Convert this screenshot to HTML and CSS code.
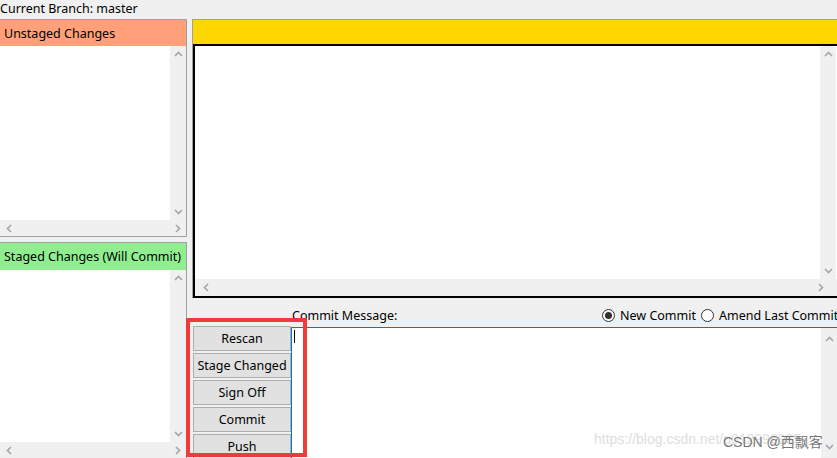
FILE: index.html
```html
<!DOCTYPE html>
<html>
<head>
<meta charset="utf-8">
<link rel="stylesheet" href="styles.css">
</head>
<body>
<div class="app">
  <div class="branch">Current Branch: master</div>
  <div class="main">
    <div class="left">
      <div class="pane pane-unstaged">
        <div class="pane-head head-unstaged">Unstaged Changes</div>
        <div class="list">
          <div class="list-row">
            <div class="list-area"></div>
            <div class="vscroll">
              <svg class="chev" width="9" height="6" viewBox="0 0 9 6"><path d="M1 5 L4.5 1.5 L8 5"/></svg>
              <svg class="chev" width="9" height="6" viewBox="0 0 9 6"><path d="M1 1 L4.5 4.5 L8 1"/></svg>
            </div>
          </div>
          <div class="hscroll">
            <svg class="chev" width="6" height="9" viewBox="0 0 6 9"><path d="M5 1 L1.5 4.5 L5 8"/></svg>
            <svg class="chev" width="6" height="9" viewBox="0 0 6 9"><path d="M1 1 L4.5 4.5 L1 8"/></svg>
          </div>
        </div>
      </div>
      <div class="pane pane-staged">
        <div class="pane-head head-staged">Staged Changes (Will Commit)</div>
        <div class="list">
          <div class="list-row">
            <div class="list-area"></div>
            <div class="vscroll">
              <svg class="chev" width="9" height="6" viewBox="0 0 9 6"><path d="M1 5 L4.5 1.5 L8 5"/></svg>
              <svg class="chev" width="9" height="6" viewBox="0 0 9 6"><path d="M1 1 L4.5 4.5 L8 1"/></svg>
            </div>
          </div>
          <div class="hscroll">
            <svg class="chev" width="6" height="9" viewBox="0 0 6 9"><path d="M5 1 L1.5 4.5 L5 8"/></svg>
            <svg class="chev" width="6" height="9" viewBox="0 0 6 9"><path d="M1 1 L4.5 4.5 L1 8"/></svg>
          </div>
        </div>
      </div>
    </div>
    <div class="right">
      <div class="diff">
        <div class="diff-head"></div>
        <div class="diff-box">
          <div class="list-row">
            <div class="list-area"></div>
            <div class="vscroll">
              <svg class="chev" width="9" height="6" viewBox="0 0 9 6"><path d="M1 5 L4.5 1.5 L8 5"/></svg>
              <svg class="chev" width="9" height="6" viewBox="0 0 9 6"><path d="M1 1 L4.5 4.5 L8 1"/></svg>
            </div>
          </div>
          <div class="hscroll">
            <svg class="chev" width="6" height="9" viewBox="0 0 6 9"><path d="M5 1 L1.5 4.5 L5 8"/></svg>
            <svg class="chev" width="6" height="9" viewBox="0 0 6 9"><path d="M1 1 L4.5 4.5 L1 8"/></svg>
          </div>
        </div>
      </div>
      <div class="commit">
        <div class="commit-bar">
          <span class="commit-label">Commit Message:</span>
          <span class="radios">
            <span class="radio checked"></span><span class="radio-text">New Commit</span>
            <span class="radio"></span><span class="radio-text">Amend Last Commit</span>
          </span>
        </div>
        <div class="commit-body">
          <div class="buttons">
            <div class="btn">Rescan</div>
            <div class="btn">Stage Changed</div>
            <div class="btn">Sign Off</div>
            <div class="btn">Commit</div>
            <div class="btn">Push</div>
          </div>
          <div class="msg">
            <div class="msg-area"><span class="caret"></span></div>
            <div class="vscroll">
              <svg class="chev" width="9" height="6" viewBox="0 0 9 6"><path d="M1 5 L4.5 1.5 L8 5"/></svg>
              <svg class="chev" width="9" height="6" viewBox="0 0 9 6"><path d="M1 1 L4.5 4.5 L8 1"/></svg>
            </div>
          </div>
        </div>
      </div>
    </div>
  </div>
  <div class="annot"></div>
  <div class="watermark"><span class="wm-url">https://blog.csdn.net/u012996985</span><span class="wm-name">CSDN @西飘客</span></div>
</div>
</body>
</html>
```
FILE: styles.css
```css
* { box-sizing: border-box; }
html, body { margin: 0; padding: 0; }
body {
  background: #f0f0f0;
  font-family: "Noto Sans", "Noto Sans CJK SC", sans-serif;
  font-size: 12.5px;
  color: #000;
  width: 837px;
  height: 458px;
  overflow: hidden;
}
.app {
  position: relative;
  width: 837px;
  height: 458px;
  display: flex;
  flex-direction: column;
}
.branch {
  height: 19px;
  line-height: 17px;
  white-space: nowrap;
}
.main {
  flex: 1;
  display: flex;
  min-height: 0;
}
.left {
  width: 187px;
  display: flex;
  flex-direction: column;
}
.pane {
  border: 1px solid #a0a0a0;
  border-left: none;
  display: flex;
  flex-direction: column;
}
.pane-unstaged { height: 218px; margin-bottom: 5px; }
.pane-staged { flex: 1; border-bottom: none; }
.pane-head {
  height: 26px;
  line-height: 27px;
  padding-left: 4px;
  white-space: nowrap;
}
.head-unstaged { background: #ffa07a; }
.head-staged { background: #90ee90; height: 27px; line-height: 27px; }
.list {
  flex: 1;
  display: flex;
  flex-direction: column;
  background: #fff;
  min-height: 0;
}
.list-row {
  flex: 1;
  display: flex;
  min-height: 0;
}
.list-area { flex: 1; background: #fff; }
.vscroll {
  width: 16px;
  background: #f0f0f0;
  display: flex;
  flex-direction: column;
  justify-content: space-between;
  align-items: center;
  padding: 5px 0 5px;
}
.hscroll {
  height: 16px;
  background: #f0f0f0;
  display: flex;
  justify-content: space-between;
  align-items: center;
  padding: 0 5px 0 6px;
}
.chev path {
  fill: none;
  stroke: #a6a6a6;
  stroke-width: 1.7;
}
.right {
  flex: 1;
  margin-left: 5px;
  display: flex;
  flex-direction: column;
  min-width: 0;
}
.diff {
  height: 279px;
  border-top: 1px solid #a0a0a0;
  border-left: 1px solid #a0a0a0;
  display: flex;
  flex-direction: column;
}
.diff-head {
  height: 24px;
  background: #ffd700;
}
.diff-box {
  flex: 1;
  border-top: 2px solid #000;
  border-left: 2px solid #000;
  border-bottom: 2px solid #000;
  display: flex;
  flex-direction: column;
  background: #fff;
  min-height: 0;
}
.diff-box .vscroll { width: 16px; margin-right: 1px; }
.diff-box .hscroll { height: 17px; padding-right: 13px; padding-left: 8px; }
.commit {
  flex: 1;
  display: flex;
  flex-direction: column;
  min-height: 0;
}
.commit-bar {
  height: 28px;
  display: flex;
  align-items: flex-end;
  padding-bottom: 2px;
  padding-left: 100px;
  white-space: nowrap;
  overflow: hidden;
}
.commit-label {
  flex: none;
  width: 310px;
}
.radios {
  flex: none;
  display: flex;
  align-items: center;
  height: 17px;
}
.radio {
  flex: none;
  width: 13px;
  height: 13px;
  border: 1px solid #333;
  border-radius: 50%;
  background: #fff;
  margin-right: 5px;
  position: relative;
}
.radio.checked::after {
  content: "";
  position: absolute;
  left: 2px;
  top: 2px;
  width: 7px;
  height: 7px;
  border-radius: 50%;
  background: #333;
}
.radio-text { margin-right: 5px; }
.commit-body {
  flex: 1;
  display: flex;
  min-height: 0;
}
.buttons {
  width: 98px;
  margin-left: 1px;
  display: flex;
  flex-direction: column;
  gap: 2px;
}
.btn {
  height: 25px;
  flex: none;
  background: #e1e1e1;
  border: 1px solid #adadad;
  text-align: center;
  line-height: 23px;
  white-space: nowrap;
}
.msg {
  flex: 1;
  margin-top: 1px;
  border-top: 1px solid #0078d7;
  border-left: 1px solid #0078d7;
  background: #fff;
  display: flex;
}
.msg-area { flex: 1; padding: 2px 0 0 2px; }
.caret {
  display: block;
  width: 1px;
  height: 13px;
  background: #000;
}
.msg .vscroll { padding: 8px 0 8px; }
.annot {
  position: absolute;
  left: 186px;
  top: 318px;
  width: 121px;
  height: 139px;
  border: 4px solid #ef3b3b;
}
.watermark {
  position: absolute;
  left: 594px;
  top: 431px;
  font-family: "Liberation Sans", "Noto Sans CJK SC", sans-serif;
  font-size: 14px;
  white-space: nowrap;
}
.wm-url { color: #dedede; }
.wm-name {
  position: absolute;
  left: 129px;
  top: 0;
  color: #777;
}
```
